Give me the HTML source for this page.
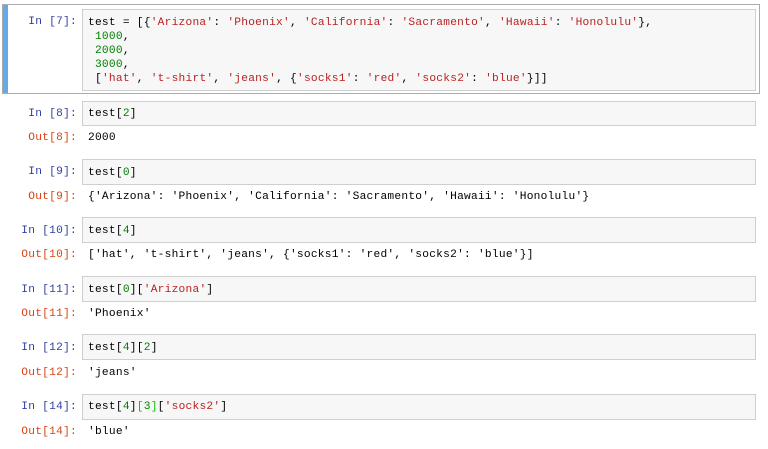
<!DOCTYPE html>
<html><head><style>
body{margin:0;width:768px;height:449px;background:#fff;position:relative;overflow:hidden;font-family:"Liberation Mono",monospace;font-size:11.2px;letter-spacing:0.25px;}
.sel{position:absolute;left:2px;top:4px;width:758px;height:90px;border:1px solid #ababab;box-sizing:border-box;}
.bar{position:absolute;left:3px;top:5px;width:5px;height:88px;background:#66a9e8;}
.box{position:absolute;left:82px;width:674px;background:#f7f7f7;border:1px solid #cfcfcf;box-sizing:border-box;}
.p{position:absolute;right:691px;text-align:right;white-space:pre;}
.in{color:#303f9f;}
.out{color:#d84315;}
.t{position:absolute;left:88px;white-space:pre;color:#000;line-height:14px;}
.s{color:#ba2121;}
.n{color:#008000;}
.b{color:#0c0;}
</style></head><body>
<div class="sel"></div><div class="bar"></div>
<div class="box" style="top:9px;height:82px"></div>
<div class="p in" style="top:16px">In [7]:</div>
<div class="t" style="top:16px">test = [{<span class="s">'Arizona'</span>: <span class="s">'Phoenix'</span>, <span class="s">'California'</span>: <span class="s">'Sacramento'</span>, <span class="s">'Hawaii'</span>: <span class="s">'Honolulu'</span>},
 <span class="n">1000</span>,
 <span class="n">2000</span>,
 <span class="n">3000</span>,
 [<span class="s">'hat'</span>, <span class="s">'t-shirt'</span>, <span class="s">'jeans'</span>, {<span class="s">'socks1'</span>: <span class="s">'red'</span>, <span class="s">'socks2'</span>: <span class="s">'blue'</span>}]]</div>

<div class="box" style="top:101px;height:25px"></div>
<div class="p in" style="top:108px">In [8]:</div>
<div class="t" style="top:107px">test[<span class="n">2</span>]</div>
<div class="p out" style="top:132px">Out[8]:</div>
<div class="t" style="top:131px">2000</div>

<div class="box" style="top:159px;height:26px"></div>
<div class="p in" style="top:166px">In [9]:</div>
<div class="t" style="top:166px">test[<span class="n">0</span>]</div>
<div class="p out" style="top:191px">Out[9]:</div>
<div class="t" style="top:190px">{'Arizona': 'Phoenix', 'California': 'Sacramento', 'Hawaii': 'Honolulu'}</div>

<div class="box" style="top:217px;height:26px"></div>
<div class="p in" style="top:225px">In [10]:</div>
<div class="t" style="top:224px">test[<span class="n">4</span>]</div>
<div class="p out" style="top:249px">Out[10]:</div>
<div class="t" style="top:248px">['hat', 't-shirt', 'jeans', {'socks1': 'red', 'socks2': 'blue'}]</div>

<div class="box" style="top:276px;height:26px"></div>
<div class="p in" style="top:284px">In [11]:</div>
<div class="t" style="top:283px">test[<span class="n">0</span>][<span class="s">'Arizona'</span>]</div>
<div class="p out" style="top:308px">Out[11]:</div>
<div class="t" style="top:307px">'Phoenix'</div>

<div class="box" style="top:334px;height:26px"></div>
<div class="p in" style="top:342px">In [12]:</div>
<div class="t" style="top:341px">test[<span class="n">4</span>][<span class="n">2</span>]</div>
<div class="p out" style="top:367px">Out[12]:</div>
<div class="t" style="top:366px">'jeans'</div>

<div class="box" style="top:394px;height:26px"></div>
<div class="p in" style="top:401px">In [14]:</div>
<div class="t" style="top:400px">test[<span class="n">4</span>]<span class="b">[</span><span class="n">3</span><span class="b">]</span>[<span class="s">'socks2'</span>]</div>
<div class="p out" style="top:426px">Out[14]:</div>
<div class="t" style="top:425px">'blue'</div>
</body></html>
